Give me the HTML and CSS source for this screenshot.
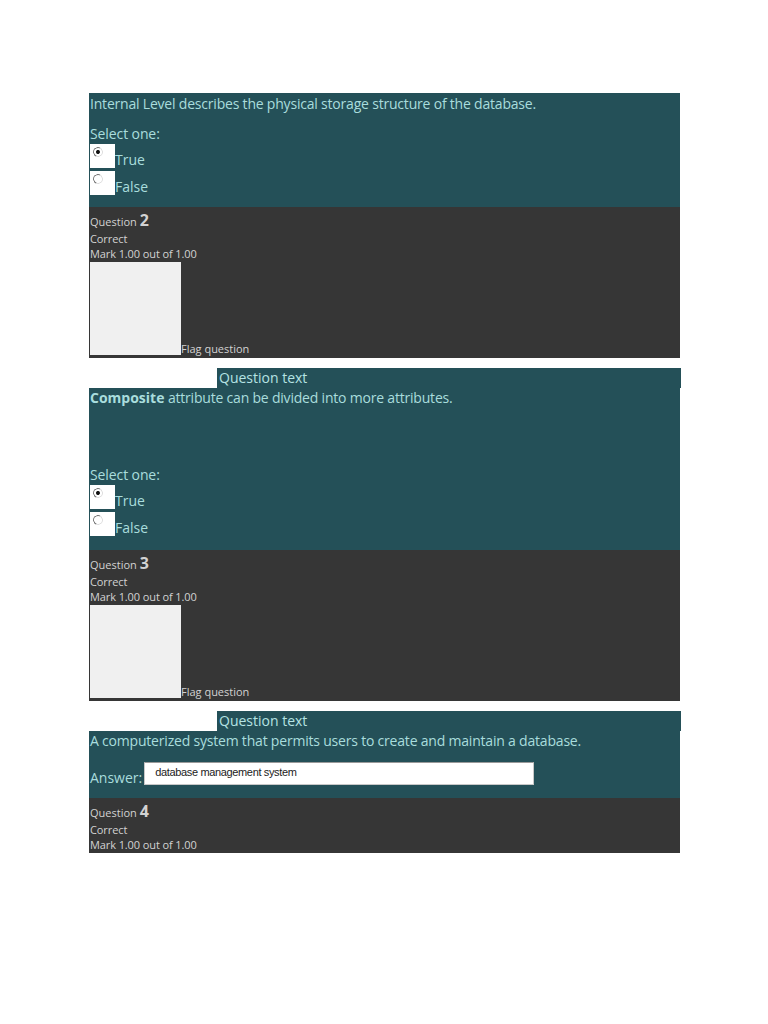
FILE: index.html
```html
<!DOCTYPE html>
<html>
<head>
<meta charset="utf-8">
<link rel="stylesheet" href="styles.css">
</head>
<body>
<main class="page">
  <section class="qbody q1">
    <p class="qtext">Internal Level describes the physical storage structure of the database.</p>
    <p class="prompt">Select one:</p>
    <div class="opt"><span class="box"><span class="radio checked"></span></span><span class="lbl">True</span></div>
    <div class="opt"><span class="box"><span class="radio"></span></span><span class="lbl">False</span></div>
  </section>
  <section class="info tall">
    <div class="qno">Question <b>2</b></div>
    <div class="line">Correct</div>
    <div class="line">Mark 1.00 out of 1.00</div>
    <div class="flagrow"><span class="flagbox"></span><span class="flagtxt">Flag question</span></div>
  </section>

  <div class="qhead"><span>Question text</span></div>
  <section class="qbody q2">
    <p class="qtext"><b>Composite</b> attribute can be divided into more attributes.</p>
    <p class="prompt">Select one:</p>
    <div class="opt"><span class="box"><span class="radio checked"></span></span><span class="lbl">True</span></div>
    <div class="opt"><span class="box"><span class="radio"></span></span><span class="lbl">False</span></div>
  </section>
  <section class="info tall">
    <div class="qno">Question <b>3</b></div>
    <div class="line">Correct</div>
    <div class="line">Mark 1.00 out of 1.00</div>
    <div class="flagrow"><span class="flagbox"></span><span class="flagtxt">Flag question</span></div>
  </section>

  <div class="qhead"><span>Question text</span></div>
  <section class="qbody q3">
    <p class="qtext wide">A computerized system that permits users to create and maintain a database.</p>
    <div class="answer"><span class="alabel">Answer:</span><span class="input">database management system</span></div>
  </section>
  <section class="info short">
    <div class="qno">Question <b>4</b></div>
    <div class="line">Correct</div>
    <div class="line">Mark 1.00 out of 1.00</div>
  </section>
</main>
</body>
</html>
```

FILE: styles.css
```css
html, body {
  margin: 0;
  padding: 0;
  background: #ffffff;
}
.page {
  width: 591px;
  margin-left: 89px;
  padding-top: 93px;
  font-family: "Open Sans", "Noto Sans", sans-serif;
  display: flex;
  flex-direction: column;
}
p { margin: 0; }

.qbody {
  background: #245058;
  color: #a9dddd;
  font-size: 14px;
  padding-left: 1px;
  display: flex;
  flex-direction: column;
}
.q1 { height: 114px; padding-top: 1px; box-sizing: border-box; }
.q2 { height: 162px; box-sizing: border-box; }
.q3 { height: 67px; box-sizing: border-box; }

.qtext {
  line-height: 20px;
  letter-spacing: -0.2px;
}
.qtext b { font-weight: 700; letter-spacing: 0; }
.qtext.wide { letter-spacing: -0.2px; }
.prompt {
  margin-top: 10px;
  line-height: 20px;
  letter-spacing: -0.1px;
}
.q2 .prompt { margin-top: 57px; }

.opt {
  display: flex;
  align-items: flex-end;
  height: 24px;
  margin-top: 3px;
}
.q1 .opt:first-of-type, .q2 .opt:first-of-type { margin-top: 0; }
.box {
  width: 25px;
  height: 24px;
  background: #ffffff;
  position: relative;
  flex: none;
}
.radio {
  position: absolute;
  left: 3px;
  top: 3px;
  width: 8px;
  height: 8px;
  border-radius: 50%;
  border: 1px solid;
  border-color: #6e6e6e #dcdcdc #dcdcdc #6e6e6e;
  transform: rotate(-20deg);
  background: #fff;
}
.radio.checked::after {
  content: "";
  position: absolute;
  left: 2px;
  top: 2px;
  width: 4px;
  height: 4px;
  border-radius: 50%;
  background: #111;
}
.lbl {
  line-height: 16px;
  font-size: 14px;
}

.info {
  background: #363636;
  color: #d2d2d2;
  font-size: 11px;
  padding-left: 1px;
  box-sizing: border-box;
  display: flex;
  flex-direction: column;
}
.info.tall { height: 151px; padding-top: 4px; }
.info.short { height: 55px; padding-top: 4px; }
.qno { line-height: 18px; letter-spacing: 0; }
.qno b { font-size: 16px; font-weight: 700; letter-spacing: 0; }
.line { line-height: 15px; letter-spacing: -0.1px; }
.flagrow {
  display: flex;
  align-items: flex-end;
  margin-top: 1px;
}
.flagbox {
  width: 91px;
  height: 93px;
  background: #f0f0f0;
  flex: none;
}
.flagtxt {
  line-height: 12px;
  letter-spacing: 0;
}

.qhead {
  margin-top: 10px;
  margin-left: 128px;
  width: 464px;
  height: 20px;
  background: #245058;
  color: #b5e3e3;
  font-size: 14px;
  line-height: 20px;
  padding-left: 2px;
  box-sizing: border-box;
}

.answer {
  display: flex;
  align-items: flex-end;
  margin-top: 11px;
}
.alabel {
  line-height: 16px;
  letter-spacing: 0;
}
.input {
  margin-left: 2px;
  margin-bottom: 1px;
  width: 390px;
  height: 23px;
  box-sizing: border-box;
  background: #ffffff;
  border: 1px solid #c8c8c8;
  border-top-color: #9a9a9a;
  color: #222;
  font-family: "Liberation Sans", Arial, sans-serif;
  font-size: 11px;
  letter-spacing: -0.35px;
  line-height: 18px;
  padding-left: 10px;
}
```
